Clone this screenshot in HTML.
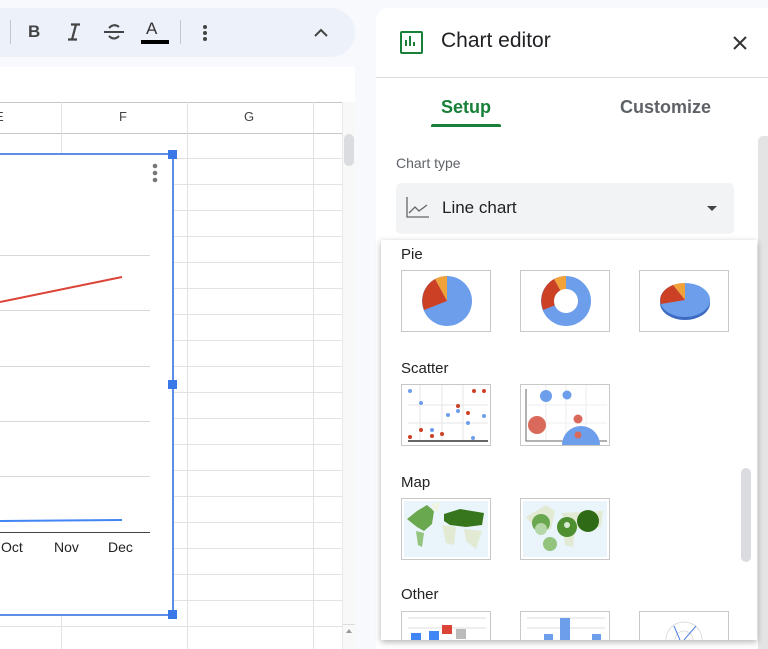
<!DOCTYPE html>
<html><head><meta charset="utf-8"><style>
html,body{margin:0;width:768px;height:649px;overflow:hidden}
body{background:#f8f9fd;font-family:"Liberation Sans",Arial,sans-serif;position:relative}
.a{position:absolute}
.t{position:absolute;white-space:nowrap}
.thumb{position:absolute;width:88px;height:60px;border:1px solid #c8c8c8;background:#fff;overflow:hidden}
</style></head><body>
<!-- toolbar -->
<div class="a" style="left:-30px;top:8px;width:385px;height:49px;background:#edf1f9;border-radius:25px"></div>
<div class="a" style="left:10px;top:20px;width:1px;height:24px;background:#c4c7cc"></div>
<div class="t" style="left:28px;top:22px;font-size:17px;font-weight:bold;color:#444">B</div>
<svg class="a" style="left:66px;top:23px" width="16" height="18"><path d="M5 1.5H14M2 16.5H11M10 1.5L6 16.5" stroke="#444" stroke-width="2.2" fill="none"/></svg>
<svg class="a" style="left:103px;top:23px" width="22" height="20"><line x1="1" y1="9" x2="21" y2="9" stroke="#444" stroke-width="2"/><path d="M6 5 Q11 0 16 4 M6 13 Q11 18 16 13" stroke="#444" stroke-width="2" fill="none"/></svg>
<div class="t" style="left:146px;top:19px;font-size:17px;color:#333">A</div>
<div class="a" style="left:141px;top:40px;width:28px;height:4px;background:#000"></div>
<div class="a" style="left:180px;top:20px;width:1px;height:24px;background:#c4c7cc"></div>
<div class="a" style="left:203px;top:25px;width:4px;height:4px;border-radius:2px;background:#444;box-shadow:0 6px #444,0 12px #444"></div>
<svg class="a" style="left:313px;top:27px" width="16" height="12"><path d="M2 9 L8 3 L14 9" stroke="#444" stroke-width="2" fill="none"/></svg>
<!-- sheet -->
<div class="a" style="left:0;top:67px;width:355px;height:582px;background:#fff"></div>
<div class="a" style="left:0;top:102px;width:342px;height:30px;border-top:1px solid #c6c6c6;border-bottom:1px solid #c6c6c6;background:#fff"></div>
<div class="t" style="left:-5px;top:109px;font-size:13px;color:#444">E</div>
<div class="t" style="left:119px;top:109px;font-size:13px;color:#444">F</div>
<div class="t" style="left:244px;top:109px;font-size:13px;color:#444">G</div>
<svg class="a" style="left:0;top:102px" width="355" height="547">
<g stroke="#e2e2e2" stroke-width="1">
<line x1="0" x2="342" y1="56.5" y2="56.5"/><line x1="0" x2="342" y1="82.5" y2="82.5"/><line x1="0" x2="342" y1="108.5" y2="108.5"/><line x1="0" x2="342" y1="134.5" y2="134.5"/><line x1="0" x2="342" y1="160.5" y2="160.5"/><line x1="0" x2="342" y1="186.5" y2="186.5"/><line x1="0" x2="342" y1="212.5" y2="212.5"/><line x1="0" x2="342" y1="238.5" y2="238.5"/><line x1="0" x2="342" y1="264.5" y2="264.5"/><line x1="0" x2="342" y1="290.5" y2="290.5"/><line x1="0" x2="342" y1="316.5" y2="316.5"/><line x1="0" x2="342" y1="342.5" y2="342.5"/><line x1="0" x2="342" y1="368.5" y2="368.5"/><line x1="0" x2="342" y1="394.5" y2="394.5"/><line x1="0" x2="342" y1="420.5" y2="420.5"/><line x1="0" x2="342" y1="446.5" y2="446.5"/><line x1="0" x2="342" y1="472.5" y2="472.5"/><line x1="0" x2="342" y1="498.5" y2="498.5"/><line x1="0" x2="342" y1="524.5" y2="524.5"/>
<line x1="61.5" x2="61.5" y1="0" y2="547"/><line x1="187.5" x2="187.5" y1="0" y2="547"/><line x1="313.5" x2="313.5" y1="0" y2="547"/>
</g>
<line x1="342.5" x2="342.5" y1="0" y2="547" stroke="#e8e8e8"/>
</svg>
<div class="a" style="left:343px;top:102px;width:12px;height:547px;background:#f8f8f8"></div>
<div class="a" style="left:344px;top:134px;width:10px;height:32px;background:#dadce0;border-radius:5px"></div>
<div class="a" style="left:343px;top:624px;width:12px;height:1px;background:#ddd"></div>
<svg class="a" style="left:345px;top:628px" width="8" height="6"><path d="M1 5 L4 1 L7 5Z" fill="#999"/></svg>
<!-- chart -->
<div class="a" style="left:-2px;top:153px;width:172px;height:459px;background:#fff;border:2px solid #5b8ee6"></div>
<svg class="a" style="left:0;top:150px" width="180" height="470">
<g stroke="#d8d8d8"><line x1="0" x2="150" y1="105.5" y2="105.5"/><line x1="0" x2="150" y1="160.5" y2="160.5"/><line x1="0" x2="150" y1="216.5" y2="216.5"/><line x1="0" x2="150" y1="271.5" y2="271.5"/><line x1="0" x2="150" y1="326.5" y2="326.5"/></g>
<line x1="0" x2="150" y1="382.5" y2="382.5" stroke="#444"/>
<line x1="0" y1="152" x2="122" y2="127" stroke="#db4437" stroke-width="2"/>
<line x1="0" y1="371" x2="122" y2="370" stroke="#4285f4" stroke-width="2"/>
<circle cx="155" cy="16" r="2.3" fill="#777"/><circle cx="155" cy="23" r="2.3" fill="#777"/><circle cx="155" cy="30" r="2.3" fill="#777"/>
<rect x="168" y="0" width="9" height="9" fill="#3b78e7"/><rect x="168" y="230" width="9" height="9" fill="#3b78e7"/><rect x="168" y="460" width="9" height="9" fill="#3b78e7"/>
</svg>
<div class="t" style="left:1px;top:539px;font-size:14px;color:#222">Oct</div>
<div class="t" style="left:54px;top:539px;font-size:14px;color:#222">Nov</div>
<div class="t" style="left:108px;top:539px;font-size:14px;color:#222">Dec</div>
<!-- right panel -->
<div class="a" style="left:376px;top:8px;width:392px;height:641px;background:#fff;border-radius:12px 0 0 0"></div>
<div class="a" style="left:376px;top:77px;width:392px;height:1px;background:#dadce0"></div>
<div class="a" style="left:400px;top:31px;width:19px;height:19px;border:2px solid #188038;border-radius:2px"></div>
<div class="a" style="left:405px;top:40px;width:2px;height:6px;background:#188038"></div>
<div class="a" style="left:409px;top:36px;width:2px;height:10px;background:#188038"></div>
<div class="a" style="left:413px;top:42px;width:2px;height:4px;background:#188038"></div>
<div class="t" style="left:441px;top:29px;font-size:21px;color:#202124">Chart editor</div>
<svg class="a" style="left:733px;top:36px" width="14" height="14"><path d="M1 1L13 13M13 1L1 13" stroke="#333" stroke-width="2"/></svg>
<div class="t" style="left:441px;top:97px;font-size:18px;font-weight:bold;color:#188038">Setup</div>
<div class="a" style="left:431px;top:124px;width:70px;height:3px;background:#188038;border-radius:2px 2px 0 0"></div>
<div class="t" style="left:620px;top:97px;font-size:18px;font-weight:bold;color:#5f6368">Customize</div>
<div class="a" style="left:758px;top:136px;width:10px;height:513px;background:#e4e4e4;border-radius:5px 0 0 0"></div>
<div class="t" style="left:396px;top:155px;font-size:14px;color:#5f6368">Chart type</div>
<div class="a" style="left:396px;top:183px;width:338px;height:51px;background:#f1f3f4;border-radius:5px"></div>
<svg class="a" style="left:406px;top:196px" width="24" height="22"><path d="M1 1V21H23" stroke="#666" stroke-width="1.3" fill="none"/><path d="M3 17L9 11L13 15L21 9" stroke="#666" stroke-width="1.3" fill="none"/></svg>
<div class="t" style="left:442px;top:198px;font-size:17px;color:#202124">Line chart</div>
<svg class="a" style="left:706px;top:205px" width="12" height="7"><path d="M1 1H11L6 6Z" fill="#444"/></svg>
<!-- popup -->
<div class="a" style="left:381px;top:240px;width:376px;height:400px;background:#fff;box-shadow:0 2px 6px rgba(0,0,0,.3);overflow:hidden">
<div class="a" style="left:360px;top:228px;width:10px;height:94px;background:#dadce0;border-radius:5px"></div>
<div class="t" style="left:20px;top:6px;font-size:15px;color:#222">Pie</div>
<div class="t" style="left:20px;top:120px;font-size:15px;color:#222">Scatter</div>
<div class="t" style="left:20px;top:234px;font-size:15px;color:#222">Map</div>
<div class="t" style="left:20px;top:346px;font-size:15px;color:#222">Other</div>
<div class="thumb" style="left:20px;top:30px"><svg width="88" height="60"><circle cx="45" cy="30" r="25" fill="#6d9eeb"/><path d="M45 30L45 5A25 25 0 0 0 33 8Z" fill="#f1a33a"/><path d="M45 30L33 8A25 25 0 0 0 22 39Z" fill="#cc4125"/></svg></div>
<div class="thumb" style="left:139px;top:30px"><svg width="88" height="60"><circle cx="45" cy="30" r="25" fill="#6d9eeb"/><path d="M45 30L45 5A25 25 0 0 0 33 8Z" fill="#f1a33a"/><path d="M45 30L33 8A25 25 0 0 0 22 39Z" fill="#cc4125"/><circle cx="45" cy="30" r="12" fill="#fff"/></svg></div>
<div class="thumb" style="left:258px;top:30px"><svg width="88" height="60"><ellipse cx="45" cy="32" rx="25" ry="17" fill="#3d6bc4"/><ellipse cx="45" cy="29" rx="25" ry="17" fill="#6d9eeb"/><path d="M45 29L45 12A25 17 0 0 0 33 14Z" fill="#f1a33a"/><path d="M45 29L33 14A25 17 0 0 0 21 33Z" fill="#cc4125"/></svg></div>
<div class="thumb" style="left:20px;top:144px"><svg width="88" height="60"><g stroke="#e6e6e6"><line x1="6" x2="86" y1="20" y2="20"/><line x1="6" x2="86" y1="38" y2="38"/><line x1="18" x2="18" y1="0" y2="56"/><line x1="40" x2="40" y1="0" y2="56"/><line x1="61" x2="61" y1="0" y2="56"/></g><line x1="6" x2="86" y1="56" y2="56" stroke="#666" stroke-width="2"/><g fill="#6d9eeb"><circle cx="8" cy="6" r="2"/><circle cx="19" cy="18" r="2"/><circle cx="46" cy="30" r="2"/><circle cx="56" cy="26" r="2"/><circle cx="66" cy="38" r="2"/><circle cx="82" cy="31" r="2"/><circle cx="30" cy="45" r="2"/><circle cx="71" cy="53" r="2"/></g><g fill="#cc4125"><circle cx="8" cy="52" r="2"/><circle cx="19" cy="45" r="2"/><circle cx="30" cy="51" r="2"/><circle cx="40" cy="49" r="2"/><circle cx="56" cy="21" r="2"/><circle cx="66" cy="28" r="2"/><circle cx="72" cy="6" r="2"/><circle cx="82" cy="6" r="2"/></g></svg></div>
<div class="thumb" style="left:139px;top:144px"><svg width="88" height="60"><g stroke="#eee"><line x1="6" x2="86" y1="20" y2="20"/><line x1="6" x2="86" y1="38" y2="38"/><line x1="25" x2="25" y1="0" y2="56"/><line x1="45" x2="45" y1="0" y2="56"/><line x1="65" x2="65" y1="0" y2="56"/></g><path d="M5 4V56H86" stroke="#666" fill="none"/><circle cx="25" cy="11" r="6" fill="#6d9eeb"/><circle cx="46" cy="10" r="4.5" fill="#6d9eeb"/><circle cx="16" cy="40" r="9" fill="#d9695a"/><circle cx="60" cy="60" r="19" fill="#6d9eeb"/><circle cx="57" cy="34" r="4.5" fill="#d9695a"/><circle cx="57" cy="50" r="3.5" fill="#d9695a"/></svg></div>
<div class="thumb" style="left:20px;top:258px"><svg width="88" height="60"><rect x="2" y="2" width="84" height="56" fill="#eaf4fb"/><path d="M5 20L15 12L25 6L32 12L30 25L22 32L15 28Z" fill="#6aa84f"/><path d="M14 32L22 34L20 48L16 46Z" fill="#93c47d"/><path d="M30 5L38 3L36 13L31 12Z" fill="#eef3e4"/><path d="M42 15L58 10L82 14L80 26L64 28L48 26L42 22Z" fill="#38761d"/><path d="M40 26L54 28L52 46L44 44Z" fill="#e3ead3"/><path d="M62 30L80 32L74 50L64 42Z" fill="#e3ead3"/></svg></div>
<div class="thumb" style="left:139px;top:258px"><svg width="88" height="60"><rect x="2" y="2" width="84" height="56" fill="#eaf4fb"/><path d="M5 18L25 6L34 12L30 30L18 34Z" fill="#e3ead3"/><path d="M40 14L82 12L80 28L50 30Z" fill="#e3ead3"/><path d="M42 30L54 30L52 48L44 46Z" fill="#e3ead3"/><circle cx="20" cy="24" r="9" fill="#6aa84f"/><circle cx="20" cy="30" r="6" fill="#b6d7a8"/><circle cx="29" cy="45" r="7" fill="#93c47d"/><circle cx="46" cy="28" r="10" fill="#4e8f2f"/><circle cx="46" cy="26" r="3" fill="#d9ead3"/><circle cx="67" cy="22" r="11" fill="#2f6b17"/></svg></div>
<div class="thumb" style="left:20px;top:371px"><svg width="88" height="60"><g stroke="#ddd"><line x1="6" x2="84" y1="6" y2="6"/><line x1="6" x2="84" y1="16" y2="16"/></g><rect x="27" y="19" width="10" height="10" fill="#4285f4"/><rect x="40" y="13" width="10" height="9" fill="#db4437"/><rect x="54" y="17" width="10" height="10" fill="#bbb"/><rect x="9" y="21" width="10" height="8" fill="#4285f4"/></svg></div>
<div class="thumb" style="left:139px;top:371px"><svg width="88" height="60"><g stroke="#ddd"><line x1="6" x2="84" y1="6" y2="6"/><line x1="6" x2="84" y1="16" y2="16"/></g><rect x="39" y="6" width="10" height="30" fill="#6d9eeb"/><rect x="23" y="22" width="9" height="10" fill="#6d9eeb"/><rect x="71" y="22" width="9" height="10" fill="#6d9eeb"/></svg></div>
<div class="thumb" style="left:258px;top:371px"><svg width="88" height="60"><circle cx="44" cy="28" r="18" stroke="#ddd" fill="none"/><circle cx="44" cy="28" r="9" stroke="#ddd" fill="none"/><path d="M40 28L34 14M44 28L56 14" stroke="#4a7fe0" fill="none"/></svg></div>
</div>
</body></html>
